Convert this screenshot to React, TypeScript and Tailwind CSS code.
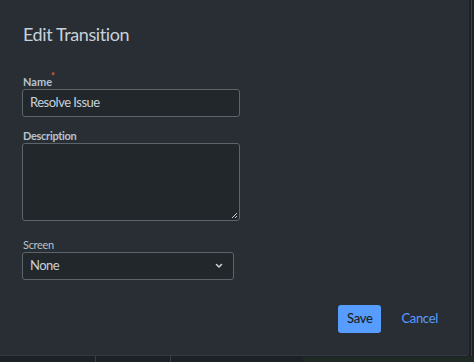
import React from "react";

export default function App() {
  return (
    <div className="relative w-[474px] h-[362px] overflow-hidden bg-[#1d2125]" style={{ fontFamily: "Lato, 'Noto Sans', sans-serif" }}>
      <div className="absolute left-[95px] top-[356px] h-[6px] w-px bg-[#3a4048]" />
      <div className="absolute left-[170px] top-[356px] h-[6px] w-px bg-[#3a4048]" />
      <div className="absolute left-[303px] top-[357px] h-[5px] w-[171px] bg-[#1f2a24]" />
      <div className="absolute left-[471px] top-0 h-[356px] w-px bg-[#3a4048]" />
      <div className="flex flex-col w-[469px] h-[356px] bg-[#282e33] rounded-br-[3px] border-b border-[#353b42] pl-[22px]">
        <h1 className="mt-[22px] ml-px text-[18px] leading-[24px] tracking-[-0.4px] text-[#c7d1db]">Edit Transition</h1>
        <div className="mt-[29px] flex flex-col">
          <label className="relative text-[11px] leading-[14px] font-bold text-[#b6c2cf] ml-px">
            Name
            <span className="absolute left-[28px] top-[-4px] text-[#ef5c48] text-[9px] leading-[10px]">*</span>
          </label>
          <div className="w-[218px] h-[28px] rounded-[3px] border border-[#5c646c] bg-[#22272b] flex items-center px-[7px] text-[13px] tracking-[-0.5px] text-[#c7d1db]">
            Resolve Issue
          </div>
        </div>
        <div className="mt-[12px] flex flex-col">
          <label className="text-[11px] leading-[14px] font-bold tracking-[-0.3px] text-[#b6c2cf] ml-px">Description</label>
          <div className="relative w-[218px] h-[78px] rounded-[3px] border border-[#5c646c] bg-[#22272b]">
            <svg className="absolute right-[1px] bottom-[1px]" width="7" height="7" viewBox="0 0 7 7">
              <path d="M6 1 L1 6 M6 4 L4 6" stroke="#c7d1db" strokeWidth="1" />
            </svg>
          </div>
        </div>
        <div className="mt-[17px] flex flex-col">
          <label className="text-[11px] leading-[14px] tracking-[-0.3px] text-[#b6c2cf] ml-px">Screen</label>
          <div className="w-[212px] h-[28px] rounded-[3px] border border-[#5c646c] bg-[#22272b] flex items-center justify-between px-[7px] text-[13px] tracking-[-0.5px] text-[#c7d1db]">
            <span>None</span>
            <svg width="8" height="6" viewBox="0 0 8 6" className="mr-[3px]">
              <path d="M1.5 1.5 L4 4 L6.5 1.5" stroke="#c7d1db" strokeWidth="1.6" fill="none" strokeLinecap="round" strokeLinejoin="round" />
            </svg>
          </div>
        </div>
        <div className="mt-auto mb-[22px] flex justify-end items-center pr-[31px]">
          <button className="h-[28px] w-[43px] rounded-[3px] bg-[#579dff] text-[13px] tracking-[-0.3px] text-[#1d2125] font-medium">Save</button>
          <button className="ml-[20px] h-[28px] text-[13px] tracking-[-0.3px] text-[#579dff]">Cancel</button>
        </div>
      </div>
    </div>
  );
}
